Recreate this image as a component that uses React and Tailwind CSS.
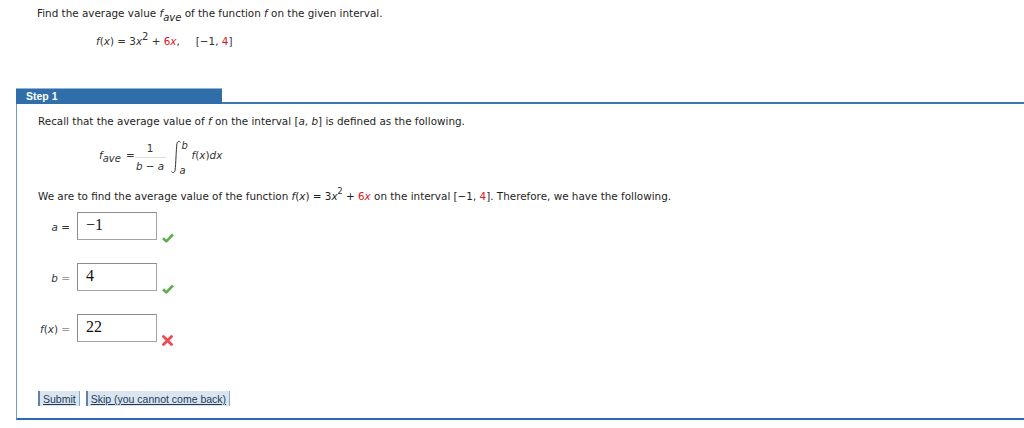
const Check = () => (
  <svg width="12" height="10" viewBox="0 0 12 10" className="block">
    <path d="M1 5.2 L4.3 8.3 L11 1.5" fill="none" stroke="#5fae4e" strokeWidth="2.6" strokeLinejoin="round" />
  </svg>
);

const Cross = () => (
  <svg width="11" height="11" viewBox="0 0 11 11" className="block">
    <path d="M1.5 1.5 L9.5 9.5 M9.5 1.5 L1.5 9.5" stroke="#ee4a4f" strokeWidth="2.8" strokeLinecap="round" />
  </svg>
);

const Integral = () => (
  <svg width="12" height="34" viewBox="0 0 12 34" className="block">
    <path d="M10.5 2.5 C9.5 0.8 7.5 1 7 3.5 C6 10 6 24 5 30.5 C4.6 33 2.5 33.2 1.5 31.5" fill="none" stroke="#333" strokeWidth="1" />
  </svg>
);

const Field = ({ label, value, ok }) => (
  <div className="flex items-start h-[28px]">
    <div className="w-[60px] pt-[9px] pr-[7px] text-right text-[#333]">{label}</div>
    <div className="w-[80px] h-[28px] border border-[#a4a4a4] border-t-[#8c8c8c] border-l-[#8c8c8c] pl-[8px] pt-[2px] text-[16px] leading-[20px] text-[#111]" style={{ fontFamily: '"Liberation Serif", serif' }}>
      {value}
    </div>
    <div className="pl-[5px] pt-[21px]">{ok ? <Check /> : <Cross />}</div>
  </div>
);

const btn = "h-[15px] px-[3px] bg-[#dae5f0] border-l-2 border-r border-l-[#5d84ae] border-r-[#8aa8c8] text-[#1d3a5c] underline text-[10.5px] leading-[14px]";

export default function App() {
  return (
    <div className="w-[1024px] h-[428px] bg-white text-[10.4px] leading-[13px] text-[#1e1e1e] overflow-hidden" style={{ fontFamily: '"DejaVu Sans", Verdana, sans-serif' }}>
      {/* question */}
      <div className="pt-[7px] pl-[37px]">
        Find the average value <i>f</i><span className="relative top-[4px] italic text-[10px]">ave</span> of the function <i>f</i> on the given interval.
      </div>
      <div className="pt-[15px] pl-[96px] text-[#333]">
        <i>f</i>(<i>x</i>) = 3<i>x</i><sup className="text-[10px]">2</sup> + <span className="text-[#e0151b]">6<i>x</i></span>,
        <span className="pl-[16px]">[−1, <span className="text-[#e0151b]">4</span>]</span>
      </div>

      {/* step */}
      <div className="mt-[40px] ml-[16px]">
        <div className="flex items-end">
          <div className="w-[206px] h-[16px] bg-[#2f6ea9] border-t border-[#8fb4d8] pl-[10px] text-white font-bold text-[10.5px] leading-[14px]" style={{ fontFamily: '"Liberation Sans", Arial, sans-serif' }}>Step 1</div>
          <div className="flex-1 h-[2px] bg-[#3c78b0]" />
        </div>
        <div className="h-[316px] border-l border-b-2 border-l-[#6a9ccc] border-b-[#2d6ab4] pl-[21px] pt-[11px]">
          <div>
            Recall that the average value of <i>f</i> on the interval [<i>a</i>, <i>b</i>] is defined as the following.
          </div>

          {/* formula */}
          <div className="flex items-center pl-[61px] pt-[8px] h-[46px] text-[#333]">
            <span className="italic">f<span className="relative top-[3px] text-[10px]">ave</span></span>
            <span className="pl-[5px]">=</span>
            <span className="inline-flex flex-col items-center relative top-[2px] leading-[11px]">
              <span className="px-[3px] pb-[3px]">1</span>
              <span className="w-[31px] h-[1px] bg-[#ddd]" />
              <span className="pt-[3px] italic">b <span className="not-italic">−</span> a</span>
            </span>
            <span className="relative ml-[4px] mr-[10px] top-[2px]">
              <Integral />
              <span className="absolute left-[12px] top-[-1px] italic text-[10px]">b</span>
              <span className="absolute left-[10px] top-[24px] italic text-[10px]">a</span>
            </span>
            <span><i>f</i>(<i>x</i>)<i>dx</i></span>
          </div>

          <div className="pt-[16px]">
            We are to find the average value of the function <i>f</i>(<i>x</i>) = 3<i>x</i><sup className="text-[8px] top-[-0.7em]">2</sup> + <span className="text-[#e0151b]">6<i>x</i></span> on the interval [−1, <span className="text-[#e0151b]">4</span>]. Therefore, we have the following.
          </div>

          <div className="ml-[-21px] pt-[9px] flex flex-col gap-[23px]">
            <Field label={<><i>a</i> =</>} value="−1" ok />
            <Field label={<><i>b</i> <span className="text-[#999]">=</span></>} value="4" ok />
            <Field label={<><i>f</i>(<i>x</i>) <span className="text-[#999]">=</span></>} value="22" />
          </div>

          <div className="pt-[49px] flex gap-[6px]">
            <button className={btn} style={{ fontFamily: '"Liberation Sans", Arial, sans-serif' }}>Submit</button>
            <button className={btn} style={{ fontFamily: '"Liberation Sans", Arial, sans-serif' }}>Skip (you cannot come back)</button>
          </div>
        </div>
      </div>
    </div>
  );
}
